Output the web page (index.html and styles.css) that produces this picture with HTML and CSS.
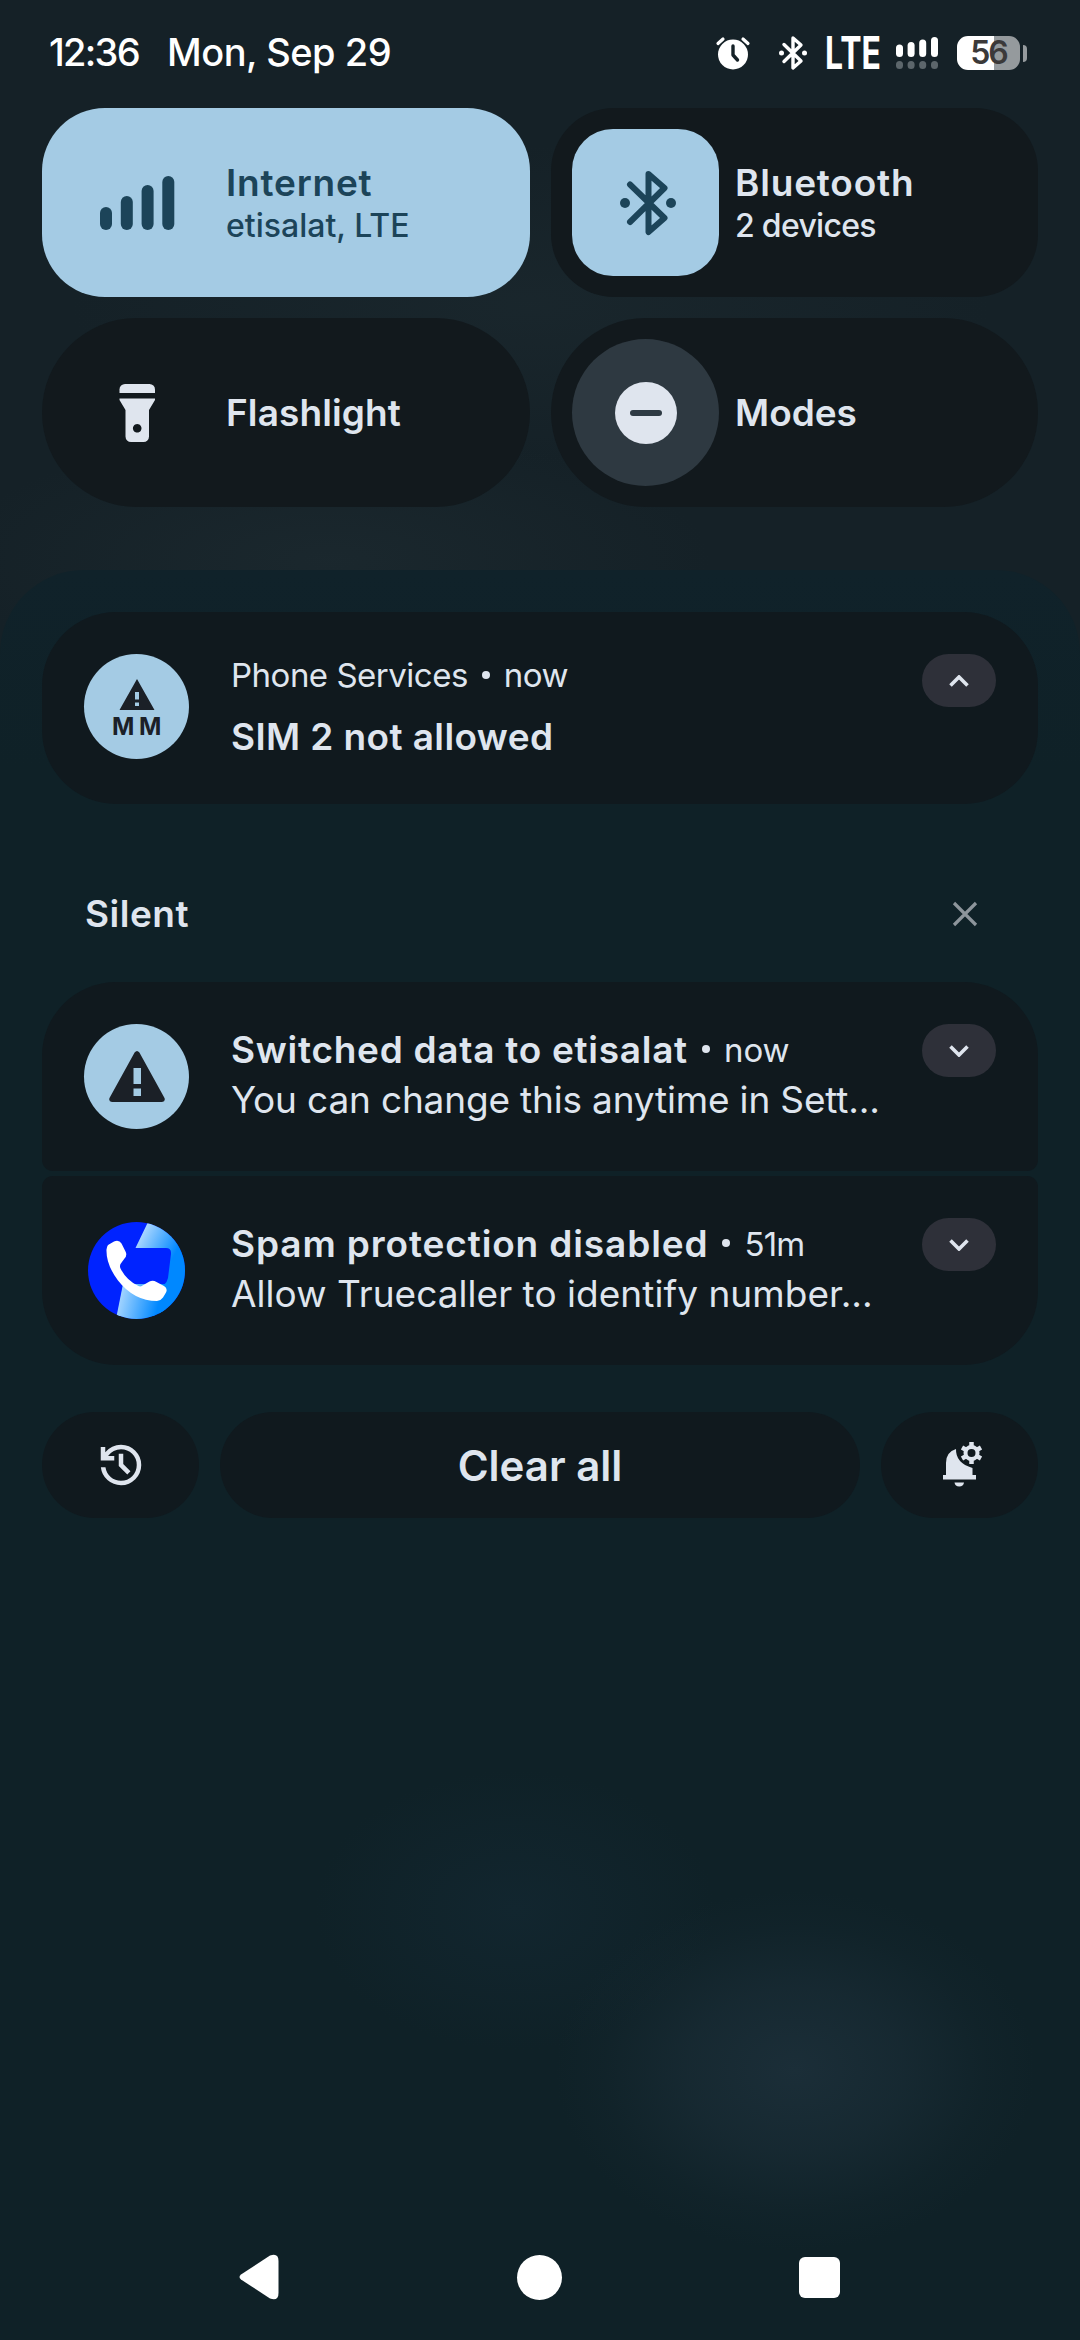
FILE: index.html
```html
<!DOCTYPE html>
<html lang="en">
<head>
<meta charset="utf-8">
<title>Notification shade</title>
<link rel="stylesheet" href="styles.css">
</head>
<body>
<header class="status-bar">
  <div class="status-left">
    <span class="clock">12:36</span>
    <span class="date">Mon, Sep 29</span>
  </div>
  <div class="status-right">
    <svg class="alarm" viewBox="0 0 36 36" width="36" height="36">
      <circle cx="18" cy="19.500" r="15" fill="#fff"/>
      <path d="M18 11v9l4.500 5" fill="none" stroke="#152127" stroke-width="3.400" stroke-linecap="round" stroke-linejoin="round"/>
      <path d="M3 8.500l5-4.500M33 8.500l-5-4.500" stroke="#fff" stroke-width="3.200" stroke-linecap="round"/>
    </svg>
    <svg class="bt-small" viewBox="0 0 30 36" width="30" height="36">
      <path d="M6 9.500l17 16.500-8 7V3l8 7L6 26.500" fill="none" stroke="#fff" stroke-width="3.400" stroke-linecap="round" stroke-linejoin="round"/>
      <circle cx="3.500" cy="18" r="2.500" fill="#fff"/><circle cx="26.500" cy="18" r="2.500" fill="#fff"/>
    </svg>
    <span class="lte"><span class="lte-text">LTE</span></span>
    <svg class="sim-bars" viewBox="0 0 42 36" width="42" height="36">
      <g fill="#fff"><rect y="9.500" width="7" height="12.500" rx="3.500"/><rect x="11.600" y="7" width="7" height="15" rx="3.500"/><rect x="23.200" y="4.500" width="7" height="17.500" rx="3.500"/><rect x="35" y="2" width="7" height="20" rx="3.500"/></g>
      <g fill="#5c666b"><rect y="26" width="7" height="8" rx="3.500"/><rect x="11.600" y="26" width="7" height="8" rx="3.500"/><rect x="23.200" y="26" width="7" height="8" rx="3.500"/><rect x="35" y="26" width="7" height="8" rx="3.500"/></g>
    </svg>
    <div class="battery"><span class="battery-body">56</span><i class="battery-nub"></i></div>
  </div>
</header>

<section class="tiles">
  <div class="tile tile-on">
    <svg class="tile-plain-icon" viewBox="0 0 75 54" width="75" height="54">
      <g fill="#1c4459"><rect y="31" width="12" height="23" rx="6"/><rect x="20.800" y="20" width="12" height="34" rx="6"/><rect x="41.600" y="9" width="12" height="45" rx="6"/><rect x="62.300" width="12" height="54" rx="6"/></g>
    </svg>
    <div class="tile-text"><div class="tile-title wide">Internet</div><div class="tile-sub carrier">etisalat, LTE</div></div>
  </div>
  <div class="tile tile-split">
    <div class="tile-button tile-button-on">
      <svg viewBox="0 0 56 66" width="56" height="66">
        <path d="M10 14.500l34.500 33.500L28.500 62V4l16 14L10 52" fill="none" stroke="#1c4459" stroke-width="6" stroke-linecap="round" stroke-linejoin="round"/>
        <circle cx="5" cy="33" r="5" fill="#1c4459"/><circle cx="51" cy="33" r="5" fill="#1c4459"/>
      </svg>
    </div>
    <div class="tile-text"><div class="tile-title wide">Bluetooth</div><div class="tile-sub">2 devices</div></div>
  </div>
  <div class="tile tile-round">
    <svg class="tile-plain-icon" viewBox="0 0 75 58" width="75" height="58">
      <g fill="#dfe5ee"><path d="M19.500 9V5.500a5.500 5.500 0 0 1 5.500-5.500h24.500a5.500 5.500 0 0 1 5.500 5.500V9z"/><path fill-rule="evenodd" d="M19.500 14.500H55V16l-6 10v26.500a5.500 5.500 0 0 1-5.500 5.500H31a5.500 5.500 0 0 1-5.500-5.500V26l-6-10zM37.200 40a4.300 4.300 0 1 0 .01 0z"/></g>
    </svg>
    <div class="tile-text"><div class="tile-title">Flashlight</div></div>
  </div>
  <div class="tile tile-split tile-round">
    <div class="tile-button tile-button-off">
      <svg viewBox="0 0 62 62" width="62" height="62"><circle cx="31" cy="31" r="31" fill="#dfe5ee"/><rect x="15" y="28" width="32" height="6" rx="3" fill="#2e3a43"/></svg>
    </div>
    <div class="tile-text"><div class="tile-title modes">Modes</div></div>
  </div>
</section>

<main class="shade">
  <article class="card card-single">
    <div class="avatar">
      <svg viewBox="0 0 36 31" width="36" height="31"><path fill-rule="evenodd" d="M18 0l17.500 31H.5zM16 13v7.500h4V13zm0 10.500v3.500h4v-3.500z" fill="#1b2027"/></svg>
      <span class="avatar-label">M M</span>
    </div>
    <div class="card-text">
      <div class="app-line"><span>Phone Services</span><i class="dot"></i><span>now</span></div>
      <div class="card-title">SIM 2 not allowed</div>
    </div>
    <div class="expand"><svg viewBox="0 0 20 12" width="20" height="12"><path d="M1.500 10.500L10 2l8.500 8.500" fill="none" stroke="#dfe5ee" stroke-width="3.600"/></svg></div>
  </article>

  <div class="section-head">
    <span>Silent</span>
    <svg viewBox="0 0 26 26" width="26" height="26"><path d="M2 2l22 22M24 2L2 24" stroke="#8d959b" stroke-width="3.200"/></svg>
  </div>

  <div class="group">
    <article class="card">
      <div class="avatar">
        <svg viewBox="0 0 56 51" width="56" height="51"><path fill-rule="evenodd" d="M25.600 1.500q2.400-3 4.800 0L55.500 47q1.200 3.500-2.500 4H3Q-.7 50.500.500 47zM24.500 17v16h7.500V17zm0 20.500v7.500h7.500v-7.500z" fill="#1b2027"/></svg>
      </div>
      <div class="card-text">
        <div class="card-line"><span class="card-title">Switched data to etisalat</span><i class="dot"></i><span class="when">now</span></div>
        <div class="card-body">You can change this anytime in Sett...</div>
      </div>
      <div class="expand"><svg viewBox="0 0 20 12" width="20" height="12"><path d="M1.500 1.500L10 10l8.500-8.500" fill="none" stroke="#dfe5ee" stroke-width="3.600"/></svg></div>
    </article>
    <article class="card">
      <div class="avatar avatar-app">
        <svg viewBox="0 0 97 97" width="97" height="97">
          <defs>
            <linearGradient id="sky" x1="30" y1="66" x2="72" y2="76" gradientUnits="userSpaceOnUse"><stop offset="0" stop-color="#b4dcff"/><stop offset="1" stop-color="#0088ff"/></linearGradient>
            <linearGradient id="sky-top" x1="54" y1="12" x2="88" y2="30" gradientUnits="userSpaceOnUse"><stop offset="0" stop-color="#a9d6ff"/><stop offset="1" stop-color="#0088ff"/></linearGradient>
            <clipPath id="disc"><circle cx="48.500" cy="48.500" r="48.500"/></clipPath>
          </defs>
          <g clip-path="url(#disc)">
            <rect width="97" height="97" fill="#0023ff"/>
            <path d="M60 0L47.500 26H78q5.500 0 5 6L80 56q-2 8-9 8v33h26V0z" fill="url(#sky-top)"/>
            <path d="M35 62L28 97h50V62z" fill="url(#sky)"/>
          </g>
          <path d="M20 23l6-3.500q5-2 7.500 2l4 8q2 4-1 7l-4 5.500q-1 2 0 4.500 6 12 18 17.500 2 1 4-.5l7-4q3.500-1.500 7 .5l7.500 4q4 2.500 2 6.500l-3 5q-2 3-6 3.500-23 0-39-20.500-12-16-11.500-31 .5-3.500 1.500-4.500z" fill="#fff"/>
        </svg>
      </div>
      <div class="card-text">
        <div class="card-line"><span class="card-title spam">Spam protection disabled</span><i class="dot"></i><span class="when minutes">51m</span></div>
        <div class="card-body allow">Allow Truecaller to identify number...</div>
      </div>
      <div class="expand"><svg viewBox="0 0 20 12" width="20" height="12"><path d="M1.500 1.500L10 10l8.500-8.500" fill="none" stroke="#dfe5ee" stroke-width="3.600"/></svg></div>
    </article>
  </div>

  <div class="actions">
    <div class="action"><svg viewBox="0 -960 960 960" width="54" height="54"><path fill="#dfe5ee" d="M480-120q-138 0-240.500-91.500T122-440h82q14 104 92.500 172T480-200q117 0 198.500-81.500T760-480q0-117-81.500-198.500T480-760q-69 0-129 32t-101 88h110v80H120v-240h80v94q51-64 124.500-99T480-840q75 0 140.500 28.500t114 77q48.500 48.500 77 114T840-480q0 75-28.500 140.500t-77 114q-48.500 48.500-114 77T480-120Zm112-192L440-464v-216h80v184l128 128-56 56Z"/></svg></div>
    <div class="action clear">Clear all</div>
    <div class="action bell"><svg viewBox="0 0 40 46" width="40" height="46">
      <path d="M0 33h3V21Q3 10 13 7q-.5 14 16.500 19v7H33v4.500H0z" fill="#dfe5ee"/>
      <path d="M11.500 40.500h9.500a4.800 4.800 0 0 1-9.500 0z" fill="#dfe5ee"/>
      <circle cx="28.500" cy="11" r="6" fill="none" stroke="#dfe5ee" stroke-width="4"/>
      <path d="M28.500 0v4M28.500 18v4M19 5.500l3.500 2M34.500 14.500l3.500 2M19 16.500l3.500-2M34.500 7.500l3.500-2" stroke="#dfe5ee" stroke-width="4.500"/>
    </svg></div>
  </div>
</main>

<nav class="nav-bar">
  <svg viewBox="0 0 41 46" width="41" height="46"><path d="M3 20.500L32 1.500Q40.500-1.500 40.500 7v32q0 8.500-8.500 5.500L3 25.500q-3-2.500 0-5z" fill="#fff"/></svg>
  <i class="home"></i>
  <i class="recents"></i>
</nav>
</body>
</html>
```
FILE: styles.css
```css
* { box-sizing: border-box; }

body {
  margin: 0;
  width: 1080px;
  height: 2340px;
  display: flex;
  flex-direction: column;
  overflow: hidden;
  font-family: Inter, "Open Sans", sans-serif;
  color: #dfe5ee;
  background:
    radial-gradient(ellipse 380px 130px at 330px 560px, rgba(32, 46, 52, .5), transparent),
    radial-gradient(ellipse 460px 160px at 530px 305px, rgba(32, 46, 52, .4), transparent),
    #152127;
}

svg { display: block; flex: none; }
i { display: block; flex: none; }

.status-bar {
  height: 108px;
  padding: 0 53px 0 49px;
  display: flex;
  justify-content: space-between;
  color: #fff;
  font-size: 38px;
  font-weight: 500;
}
.status-left { display: flex; height: 104px; align-items: center; }
.clock { width: 118px; letter-spacing: -1.7px; }
.date { letter-spacing: -.5px; }
.status-right { display: flex; height: 106px; align-items: center; }
.bt-small { margin-left: 27px; }
.lte { width: 57px; height: 46px; margin-left: 17px; line-height: 46px; }
.lte-text { display: inline-block; font-size: 45px; font-weight: 700; transform: scaleX(.71); transform-origin: 0 50%; }
.sim-bars { margin-left: 14px; }
.battery { display: flex; align-items: center; gap: 3px; margin-left: 19px; }
.battery-body {
  width: 63px;
  height: 34px;
  border-radius: 11px;
  background: linear-gradient(90deg, #fff 37px, #959a9d 37px);
  color: #3b3939;
  font-size: 32px;
  font-weight: 600;
  line-height: 34px;
  letter-spacing: -2px;
  text-align: center;
}
.battery-nub { width: 4px; height: 17px; border-radius: 0 4px 4px 0; background: #959a9d; }

.tiles {
  height: 462px;
  padding: 0 42px;
  display: grid;
  grid-template-columns: 488px 487px;
  grid-auto-rows: 189px;
  gap: 21px;
}
.tile {
  display: flex;
  align-items: center;
  border-radius: 63px;
  background: #12191d;
  padding-left: 58px;
}
.tile-on { background: #a4cbe4; color: #1c4459; }
.tile-round { border-radius: 95px; }
.tile-split { padding-left: 21px; }
.tile-plain-icon { margin-right: 51px; }
.tile-button {
  width: 147px;
  height: 147px;
  margin-right: 16px;
  display: flex;
  align-items: center;
  justify-content: center;
}
.tile-button-on { border-radius: 41px; background: #a4cbe4; padding-left: 5px; }
.tile-button-off { border-radius: 50%; background: #2e3941; }
.tile-title { font-size: 37px; font-weight: 600; line-height: 45px; letter-spacing: .1px; }
.tile-title.wide { letter-spacing: .8px; }
.tile-title.modes { letter-spacing: 0; }
.tile-sub { font-size: 32px; font-weight: 500; line-height: 41px; letter-spacing: -.7px; }
.tile-sub.carrier { letter-spacing: 0; }

.shade {
  flex: 1;
  padding: 42px 42px 0;
  border-radius: 84px 84px 0 0;
  background:
    radial-gradient(ellipse 240px 180px at 795px 1500px, #1b2e38, rgba(27, 46, 56, .6) 45%, rgba(27, 46, 56, .15) 80%, transparent),
    radial-gradient(ellipse 200px 140px at 515px 1340px, #12262f, transparent),
    linear-gradient(#10222a, #0f2127 200px);
}
.card {
  height: 189px;
  padding: 42px;
  display: flex;
  background: #10191e;
}
.card-single { height: 192px; border-radius: 74px; }
.group { display: grid; gap: 5px; }
.group .card:first-child { border-radius: 74px 74px 11px 11px; }
.group .card:last-child { border-radius: 11px 11px 74px 74px; }
.avatar {
  width: 105px;
  height: 105px;
  flex: none;
  border-radius: 50%;
  background: #a4cbe4;
  display: flex;
  flex-direction: column;
  align-items: center;
  justify-content: center;
}
.avatar-app { background: none; }
.avatar-label { margin: 5px 0 -5px; font-size: 24px; font-weight: 700; line-height: 24px; letter-spacing: -.5px; color: #1b2027; }
.card-text { flex: 1; margin-left: 42px; white-space: nowrap; }
.app-line, .card-line { display: flex; align-items: center; }
.app-line { height: 42px; font-size: 33px; letter-spacing: -.5px; }
.dot { width: 8px; height: 8px; margin: 0 14px; border-radius: 50%; background: #dfe5ee; }
.card-title { font-size: 37px; font-weight: 600; letter-spacing: .72px; }
.card-title.spam { letter-spacing: .88px; }
.app-line + .card-title { margin-top: 17px; line-height: 47px; letter-spacing: .4px; }
.card-line { height: 50px; }
.when { font-size: 33px; line-height: 50px; padding-top: 2px; }
.when.minutes { letter-spacing: -.8px; }
.card-body { font-size: 37px; line-height: 52px; letter-spacing: -.17px; }
.card-body.allow { letter-spacing: .04px; }
.expand {
  width: 74px;
  height: 53px;
  flex: none;
  border-radius: 27px;
  background: #2e3039;
  display: flex;
  align-items: center;
  justify-content: center;
}
.section-head {
  height: 178px;
  padding: 41px 60px 0 43px;
  display: flex;
  align-items: center;
  justify-content: space-between;
  font-size: 37px;
  font-weight: 600;
  letter-spacing: .5px;
}
.actions { display: grid; grid-template-columns: 157px 640px 157px; gap: 21px; margin-top: 47px; }
.action {
  height: 106px;
  border-radius: 53px;
  background: #10191e;
  display: flex;
  align-items: center;
  justify-content: center;
}
.action.bell { padding-left: 7px; }
.clear { font-size: 42px; font-weight: 600; letter-spacing: 0; }

.nav-bar {
  height: 126px;
  margin-top: -126px;
  padding: 0 240px 0 238px;
  display: flex;
  align-items: center;
  justify-content: space-between;
}
.home { width: 45px; height: 45px; border-radius: 50%; background: #fff; }
.recents { width: 41px; height: 41px; border-radius: 6px; background: #fff; }
```
